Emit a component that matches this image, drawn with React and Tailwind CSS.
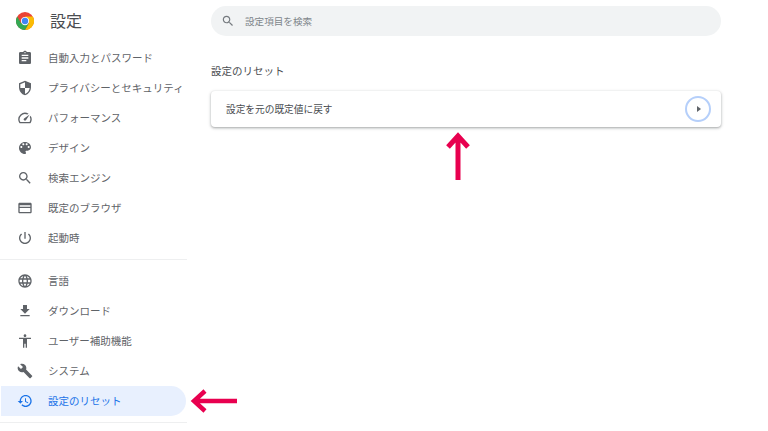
import React from 'react'

const icons = {
  assignment: 'M19 3h-4.18C14.4 1.84 13.3 1 12 1c-1.3 0-2.4.84-2.82 2H5c-1.1 0-2 .9-2 2v14c0 1.1.9 2 2 2h14c1.1 0 2-.9 2-2V5c0-1.1-.9-2-2-2zm-7 0c.55 0 1 .45 1 1s-.45 1-1 1-1-.45-1-1 .45-1 1-1zm2 14H7v-2h7v2zm3-4H7v-2h10v2zm0-4H7V7h10v2z',
  security: 'M12 1L3 5v6c0 5.55 3.84 10.74 9 12 5.16-1.26 9-6.45 9-12V5l-9-4zm0 10.99h7c-.53 4.12-3.28 7.79-7 8.94V12H5V6.3l7-3.11v8.8z',
  speed: 'M20.38 8.57l-1.23 1.85a8 8 0 0 1-.22 7.58H5.07A8 8 0 0 1 15.58 6.85l1.85-1.23A10 10 0 0 0 3.35 19a2 2 0 0 0 1.72 1h13.85a2 2 0 0 0 1.74-1 10 10 0 0 0-.27-10.44zm-9.79 6.84a2 2 0 0 0 2.83 0l5.66-8.49-8.49 5.66a2 2 0 0 0 0 2.83z',
  palette: 'M12 3c-4.97 0-9 4.03-9 9s4.03 9 9 9c.83 0 1.5-.67 1.5-1.5 0-.39-.15-.74-.39-1.01-.23-.26-.38-.61-.38-.99 0-.83.67-1.5 1.5-1.5H16c2.76 0 5-2.24 5-5 0-4.42-4.03-8-9-8zm-5.5 9c-.83 0-1.5-.67-1.5-1.5S5.67 9 6.5 9 8 9.67 8 10.5 7.33 12 6.5 12zm3-4C8.67 8 8 7.33 8 6.5S8.67 5 9.5 5s1.5.67 1.5 1.5S10.33 8 9.5 8zm5 0c-.83 0-1.5-.67-1.5-1.5S13.67 5 14.5 5s1.5.67 1.5 1.5S15.33 8 14.5 8zm3 4c-.83 0-1.5-.67-1.5-1.5S16.67 9 17.5 9s1.5.67 1.5 1.5-.67 1.5-1.5 1.5z',
  search: 'M15.5 14h-.79l-.28-.27C15.41 12.59 16 11.11 16 9.5 16 5.91 13.09 3 9.5 3S3 5.91 3 9.5 5.91 16 9.5 16c1.61 0 3.09-.59 4.23-1.57l.27.28v.79l5 4.99L20.49 19l-4.99-5zm-6 0C7.01 14 5 11.99 5 9.5S7.01 5 9.5 5 14 7.01 14 9.5 11.99 14 9.5 14z',
  browser: 'M20 4H4c-1.11 0-2 .9-2 2v12c0 1.1.89 2 2 2h16c1.1 0 2-.9 2-2V6c0-1.1-.89-2-2-2zm0 14H4v-6h16v6zm0-8H4V8h16v2z',
  power: 'M13 3h-2v10h2V3zm4.83 2.17l-1.42 1.42C17.99 7.86 19 9.81 19 12c0 3.87-3.13 7-7 7s-7-3.13-7-7c0-2.19 1.01-4.14 2.58-5.42L6.17 5.17C4.23 6.82 3 9.26 3 12c0 4.97 4.03 9 9 9s9-4.03 9-9c0-2.74-1.23-5.18-3.17-6.83z',
  language: 'M11.99 2C6.47 2 2 6.48 2 12s4.47 10 9.99 10C17.52 22 22 17.52 22 12S17.52 2 11.99 2zm6.93 6h-2.95c-.32-1.25-.78-2.45-1.38-3.56 1.84.63 3.37 1.91 4.33 3.56zM12 4.04c.83 1.2 1.48 2.53 1.91 3.96h-3.82c.43-1.43 1.08-2.76 1.91-3.96zM4.26 14C4.1 13.36 4 12.69 4 12s.1-1.36.26-2h3.38c-.08.66-.14 1.32-.14 2 0 .68.06 1.34.14 2H4.26zm.82 2h2.95c.32 1.25.78 2.45 1.38 3.56-1.84-.63-3.37-1.9-4.33-3.56zm2.95-8H5.08c.96-1.66 2.49-2.93 4.33-3.56C8.81 5.55 8.35 6.75 8.03 8zM12 19.96c-.83-1.2-1.48-2.53-1.91-3.96h3.82c-.43 1.43-1.08 2.76-1.91 3.96zM14.34 14H9.66c-.09-.66-.16-1.32-.16-2 0-.68.07-1.35.16-2h4.68c.09.65.16 1.32.16 2 0 .68-.07 1.34-.16 2zm.25 5.56c.6-1.11 1.06-2.31 1.38-3.56h2.95c-.96 1.65-2.49 2.93-4.33 3.56zM16.36 14c.08-.66.14-1.32.14-2 0-.68-.06-1.34-.14-2h3.38c.16.64.26 1.31.26 2s-.1 1.36-.26 2h-3.38z',
  download: 'M19 9h-4V3H9v6H5l7 7 7-7zM5 18v2h14v-2H5z',
  accessibility: 'M12 2c1.1 0 2 .9 2 2s-.9 2-2 2-2-.9-2-2 .9-2 2-2zm9 7h-6v13h-2v-6h-2v6H9V9H3V7h18v2z',
  build: 'M22.7 19l-9.1-9.1c.9-2.3.4-5-1.5-6.9-2-2-5-2.4-7.4-1.3L9 6 6 9 1.6 4.7C.4 7.1.9 10.1 2.9 12.1c1.9 1.9 4.6 2.4 6.9 1.5l9.1 9.1c.4.4 1 .4 1.4 0l2.3-2.3c.5-.4.5-1.1.1-1.4z',
  restore: 'M13 3c-4.97 0-9 4.03-9 9H1l3.89 3.89.07.14L9 12H6c0-3.87 3.13-7 7-7s7 3.13 7 7-3.13 7-7 7c-1.93 0-3.68-.79-4.94-2.06l-1.42 1.42C8.27 19.99 10.51 21 13 21c4.97 0 9-4.03 9-9s-4.03-9-9-9zm-1 5v5l4.28 2.54.72-1.21-3.5-2.08V8H12z',
}

const topItems = [
  ['assignment', '自動入力とパスワード'],
  ['security', 'プライバシーとセキュリティ'],
  ['speed', 'パフォーマンス'],
  ['palette', 'デザイン'],
  ['search', '検索エンジン'],
  ['browser', '既定のブラウザ'],
  ['power', '起動時'],
]

const bottomItems = [
  ['language', '言語'],
  ['download', 'ダウンロード'],
  ['accessibility', 'ユーザー補助機能'],
  ['build', 'システム'],
  ['restore', '設定のリセット', true],
]

function Icon({ name, className }) {
  return (
    <svg viewBox="0 0 24 24" fill="currentColor" className={className}>
      <path d={icons[name]} />
    </svg>
  )
}

function NavItem({ icon, label, active }) {
  return (
    <div className={`flex h-[30px] w-[185px] items-center rounded-r-[15px] pl-[16px] ${active ? 'bg-[#e8f0fe] text-[#1a73e8]' : 'text-[#5f6368]'}`}>
      <Icon name={icon} className="h-4 w-4 shrink-0" />
      <span className="ml-[15px] whitespace-nowrap text-[10.5px]">{label}</span>
    </div>
  )
}

function ChromeLogo() {
  return (
    <svg viewBox="0 0 48 48" className="h-[18px] w-[18px]">
      <circle cx="24" cy="24" r="24" fill="#ea4335" />
      <path d="M24 48a24 24 0 0 0 20.8-36H24l10.4 18z" fill="#fbbc04" />
      <path d="M3.2 12A24 24 0 0 0 24 48l10.4-18H13.6z" fill="#34a853" />
      <circle cx="24" cy="24" r="11" fill="#fff" />
      <circle cx="24" cy="24" r="8.5" fill="#4285f4" />
    </svg>
  )
}

export default function App() {
  return (
    <div className="relative flex h-[431px] w-[768px] overflow-hidden bg-white font-['Noto_Sans_CJK_JP','Noto_Sans',sans-serif]">
      {/* Sidebar */}
      <aside className="w-[187px] shrink-0 pl-px">
        <div className="flex h-[43px] items-center pb-[2px] pl-[15px]">
          <ChromeLogo />
          <span className="ml-[16px] -translate-y-px text-[16px] text-[#4a4d51]">設定</span>
        </div>
        <nav className="-ml-px border-b border-[#eeeff0] pb-[6px] pl-px">
          {topItems.map(([icon, label]) => (
            <NavItem key={label} icon={icon} label={label} />
          ))}
        </nav>
        <nav className="-ml-px border-b border-[#eeeff0] pb-[6px] pl-px pt-[6px]">
          {bottomItems.map(([icon, label, active]) => (
            <NavItem key={label} icon={icon} label={label} active={active} />
          ))}
        </nav>
      </aside>

      {/* Main */}
      <main className="ml-[24px] w-[510px] pt-[6px]">
        <div className="flex h-[30px] items-center rounded-[15px] bg-[#f1f3f4] pl-[10px] text-[#757a7f]">
          <Icon name="search" className="h-[14px] w-[14px]" />
          <span className="ml-[10px] text-[9.6px] text-[#80868b]">設定項目を検索</span>
        </div>
        <h2 className="mt-[26px] text-[10.5px] font-normal leading-[18px] text-[#4a4d51]">設定のリセット</h2>
        <div className="mt-[11px] flex h-[36px] items-center justify-between rounded-[4px] bg-white pl-[15px] pr-[10px] shadow-[0_1px_2px_rgba(60,64,67,0.3),0_1px_3px_1px_rgba(60,64,67,0.15)]">
          <span className="text-[9.7px] text-[#4a4d51]">設定を元の既定値に戻す</span>
          <div className="flex h-[26px] w-[26px] items-center justify-center rounded-full border-2 border-[#b5cffa]">
            <div className="ml-px h-0 w-0 border-y-[3.5px] border-l-[4px] border-y-transparent border-l-[#5f6368]" />
          </div>
        </div>
      </main>

      {/* Annotation arrows */}
      <svg viewBox="0 0 26 48" className="absolute left-[445px] top-[132px] h-[48px] w-[26px]">
        <path d="M13 48V4M3 15 13 4l10 11" fill="none" stroke="#e8004f" strokeWidth="5" />
      </svg>
      <svg viewBox="0 0 48 26" className="absolute left-[190px] top-[388px] h-[26px] w-[48px]">
        <path d="M47 13H4M15 3 4 13l11 10" fill="none" stroke="#e8004f" strokeWidth="4.5" />
      </svg>
    </div>
  )
}
